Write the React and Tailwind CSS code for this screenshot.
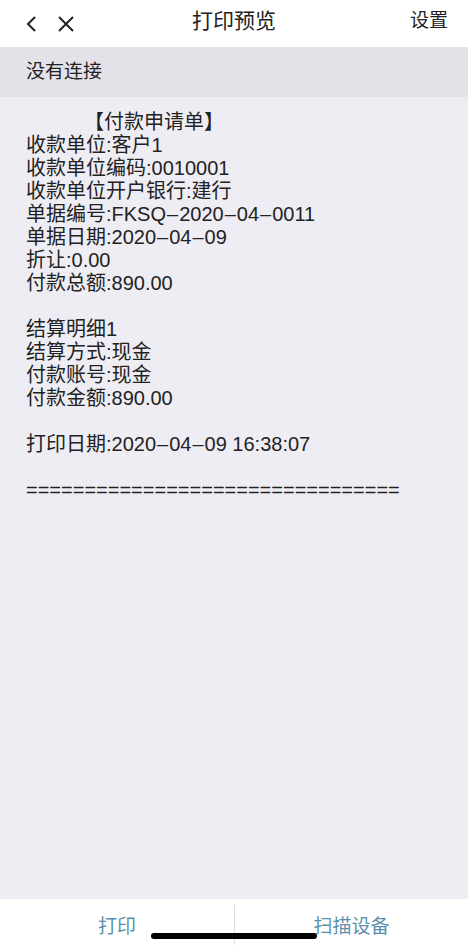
import React from 'react';

const lines = [
  '收款单位:客户1',
  '收款单位编码:0010001',
  '收款单位开户银行:建行',
  '单据编号:FKSQ-2020-04-0011',
  '单据日期:2020-04-09',
  '折让:0.00',
  '付款总额:890.00',
  '',
  '结算明细1',
  '结算方式:现金',
  '付款账号:现金',
  '付款金额:890.00',
  '',
  '打印日期:2020-04-09 16:38:07',
  '',
  '================================',
];

// hyphens in the receipt font are long dashes
const renderLine = (text) =>
  text.split(/(-)/).map((part, i) =>
    part === '-' ? (
      <span key={i} className="px-[1px]">–</span>
    ) : (
      part
    )
  );

const App = () => {
  return (
    <div
      className="flex flex-col h-[950px] w-[468px] bg-[#efedf4] text-[#222]"
      style={{ fontFamily: '"Liberation Sans", "Noto Sans CJK SC", sans-serif' }}
    >
      {/* header */}
      <div className="h-[47px] bg-white flex items-center px-6 relative">
        <div className="flex items-center gap-[17px]">
          <svg width="16" height="18" viewBox="0 0 16 18" fill="none" stroke="#222" strokeWidth="2">
            <path d="M11 2 L4 9 L11 16" />
          </svg>
          <svg width="18" height="18" viewBox="0 0 18 18" fill="none" stroke="#222" strokeWidth="2">
            <path d="M2 2 L16 16 M16 2 L2 16" />
          </svg>
        </div>
        <div className="absolute left-0 right-0 text-center text-[21px] leading-none pointer-events-none -translate-y-[3px]">
          打印预览
        </div>
        <div className="ml-auto text-[19px] leading-none -mr-[4px] -translate-y-[3px]">设置</div>
      </div>

      {/* status bar */}
      <div className="h-[50px] bg-[#e4e2e9] flex items-center px-[26px] text-[19px]">没有连接</div>

      {/* receipt */}
      <div className="flex-1 px-[26px] pt-[14px] text-[20px] leading-[23px]">
        <div className="pl-[58px]">【付款申请单】</div>
        {lines.map((l, i) => (
          <div key={i} className="h-[23px] whitespace-pre">{renderLine(l)}</div>
        ))}
      </div>

      {/* bottom */}
      <div className="h-[51px] bg-white flex items-start relative text-[19px] text-[#5b8fae]">
        <div className="w-[234px] flex justify-center pt-[14px]">打印</div>
        <div className="w-px h-[40px] bg-[#ddd] mt-[6px]"></div>
        <div className="flex-1 flex justify-center pt-[14px]">扫描设备</div>
        <div className="absolute left-[151px] w-[166px] h-[6px] rounded-full bg-black top-[34px]"></div>
      </div>
    </div>
  );
};

export default App;
